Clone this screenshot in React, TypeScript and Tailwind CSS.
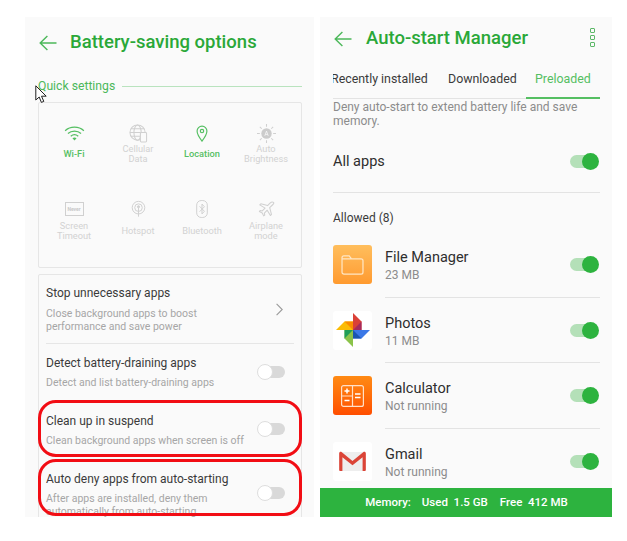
import { ReactNode } from "react";

const GREEN = "#2db33f";

function BackArrow() {
    return (
        <svg width="18" height="16" viewBox="0 0 18 16" fill="none" stroke="#4cb85a" strokeWidth="1.4">
            <path d="M17.5 8H1.2M8.4 1 1.2 8l7.2 7" />
        </svg>
    );
}

function ToggleOn() {
    return (
        <div className="relative mr-[1px] h-[17px] w-[29px] shrink-0">
            <div className="absolute left-0 top-[2px] h-[13px] w-[26px] rounded-full bg-[#b4e0b8]" />
            <div className="absolute right-0 top-0 h-[17px] w-[17px] rounded-full bg-[#2db33f]" />
        </div>
    );
}

function ToggleOff() {
    return (
        <div className="relative h-[16px] w-[28px] shrink-0">
            <div className="absolute right-0 top-[2px] h-[12px] w-[24px] rounded-full bg-[#d9d9d9]" />
            <div className="absolute left-0 top-0 h-[16px] w-[16px] rounded-full border border-[#dedede] bg-white" />
        </div>
    );
}

function QuickCell({ icon, label, active, up }: { icon: ReactNode; label: string[]; active?: boolean; up?: boolean }) {
    return (
        <div className="flex h-[76px] w-[64px] flex-col items-center">
            <div className="flex h-[22px] items-center justify-center">{icon}</div>
            <div
                className={`flex h-[22px] flex-col items-center justify-center text-center text-[9.25px] leading-[10px] ${
                    active ? "font-medium text-[#55bf62]" : "text-[#d2d2d2]"
                } ${up ? "-mt-[1px]" : ""}`}
            >
                {label.map((l) => (
                    <span key={l}>{l}</span>
                ))}
            </div>
        </div>
    );
}

function WifiIcon() {
    return (
        <svg width="21" height="15" viewBox="0 0 22 16" fill="none" stroke="#55bf62" strokeWidth="1.3">
            <path d="M1 5c5.500-5 14.500-5 20 0M4 8c3.800-3.400 10.200-3.400 14 0M7 11c2.300-2 5.700-2 8 0" />
            <path d="M8.800 13c1.300-1 3.100-1 4.400 0L11 15.500z" fill="#55bf62" stroke="none" />
        </svg>
    );
}

function GlobeIcon() {
    return (
        <svg width="19" height="19" viewBox="0 0 20 20" fill="none" stroke="#d0d0d0" strokeWidth="1.100">
            <circle cx="9" cy="9" r="8" />
            <ellipse cx="9" cy="9" rx="3.800" ry="8" />
            <path d="M1 9h16M2 5h14M2 13h14" />
            <rect x="12" y="9" width="6.500" height="10" rx="1" fill="#fafafa" />
        </svg>
    );
}

function PinIcon() {
    return (
        <svg width="12" height="17" viewBox="0 0 13 19" fill="none" stroke="#55bf62" strokeWidth="1.300">
            <path d="M6.500 18C3 13.500 1 10.500 1 6.800a5.500 5.500 0 0 1 11 0C12 10.500 10 13.500 6.500 18z" />
            <circle cx="6.500" cy="6.800" r="1.900" />
        </svg>
    );
}

function BrightnessIcon() {
    return (
        <svg width="19" height="19" viewBox="0 0 20 20" fill="none" stroke="#d0d0d0" strokeWidth="1.100">
            <path d="M10 0v3M10 17v3M0 10h3M17 10h3M3 3l2 2M15 15l2 2M3 17l2-2M15 5l2-2" />
            <circle cx="10" cy="10" r="5.500" fill="#cccccc" stroke="none" />
            <path d="M8.200 12.500 10 7.500l1.800 5M8.800 11h2.400" stroke="#fafafa" strokeWidth=".8" />
        </svg>
    );
}

function NeverIcon() {
    return (
        <div className="flex h-[14px] w-[19px] items-center justify-center border border-[#d0d0d0] text-[5px] font-bold leading-none text-[#c8c8c8]">
            Never
        </div>
    );
}

function HotspotIcon() {
    return (
        <svg width="15" height="18" viewBox="0 0 16 20" fill="none" stroke="#d0d0d0" strokeWidth="1.100">
            <circle cx="8" cy="8.500" r="7" />
            <circle cx="8" cy="8.500" r="4.200" />
            <circle cx="8" cy="7.500" r="1.200" fill="#d0d0d0" />
            <path d="M8 8.500v10" />
        </svg>
    );
}

function BluetoothIcon() {
    return (
        <svg width="12" height="18" viewBox="0 0 13 20" fill="none" stroke="#d0d0d0" strokeWidth="1.100">
            <rect x=".6" y=".6" width="11.800" height="18.800" rx="5" />
            <path d="m3.800 7 5.400 5.500L6.500 15.500v-11l2.700 3L3.800 13" />
        </svg>
    );
}

function PlaneIcon() {
    return (
        <svg width="17" height="17" viewBox="0 0 24 24" fill="none" stroke="#d0d0d0" strokeWidth="1.500" strokeLinejoin="round">
            <path d="M22 2c-1.500-1-3.500-.5-5 1l-3.500 3.500L4 4 2.500 5.500 10 10l-4 4-3-.5L2 15l4 2 2 4 1.500-1-.5-3 4-4 4.500 7.500L19 19l-2.500-9.500L20 6c1.500-1.500 3-3 2-4z" />
        </svg>
    );
}

function SettingRow({ title, sub, toggleTop }: { title: string; sub: string[]; toggleTop: string }) {
    return (
        <div className="flex h-[58px] items-start justify-between pl-[7px] pr-[16px]">
            <div className="pt-[11px]">
                <div className="text-[12px] leading-[16px] text-[#3a3a3a]">{title}</div>
                <div className="mt-[5px] text-[10.500px] leading-[13px] text-[#a6a6a6]">
                    {sub.map((s) => (
                        <div key={s}>{s}</div>
                    ))}
                </div>
            </div>
            <div className={toggleTop}>
                <ToggleOff />
            </div>
        </div>
    );
}

function RedBox({ children, box }: { children: ReactNode; box: string }) {
    return (
        <div className="relative">
            {children}
            <div className={`absolute -left-[1px] -right-[1px] h-[57px] rounded-[18px] border-[3px] border-[#f20d14] ${box}`} />
        </div>
    );
}

function FolderIcon() {
    return (
        <div className="flex h-[39px] w-[39px] items-center justify-center rounded-[3px] bg-gradient-to-b from-[#ffbe5c] to-[#ff9a2e]">
            <svg width="23" height="20" viewBox="0 0 24 21" fill="none" stroke="#ffe6c4" strokeWidth="1.300">
                <path d="M1 18V3a2 2 0 0 1 2-2h5.500L11 4h10a2 2 0 0 1 2 2v12a2 2 0 0 1-2 2H3a2 2 0 0 1-2-2zM11 4H1" />
            </svg>
        </div>
    );
}

function PhotosIcon() {
    return (
        <div className="flex h-[39px] w-[39px] items-center justify-center rounded-[3px] bg-white">
            <svg width="34" height="34" viewBox="0 0 34 34">
                <path d="M17 17V0l8.500 8.500V17z" fill="#da4037" />
                <path d="M17 17h17l-8.500 8.500H17z" fill="#3b78e7" />
                <path d="M17 17v17l-8.500-8.500V17z" fill="#8bc34a" />
                <path d="M17 17H0l8.500-8.500H17z" fill="#fbbc05" />
                <path d="M17 17 8.500 8.500H17z" fill="#fb8c00" />
                <path d="M17 17h8.500V8.500z" fill="#a52a5c" />
                <path d="M17 17v8.500h8.500z" fill="#1a56b0" />
                <path d="M17 17H8.500v8.500z" fill="#1f9e58" />
            </svg>
        </div>
    );
}

function CalcIcon() {
    return (
        <div className="flex h-[39px] w-[39px] items-center justify-center rounded-[3px] bg-gradient-to-b from-[#ff8a14] to-[#ff4d00]">
            <svg width="23" height="22" viewBox="0 0 23 22" fill="none" stroke="#ffe0c8" strokeWidth="1.200">
                <rect x=".6" y=".6" width="21.800" height="20.800" rx="2" />
                <path d="M11.500 1v20M1 11h10.500" />
                <path d="M3.500 6h5M6 3.500v5M3.500 15.500h5M14 9h5.500M14 12.500h5.500" strokeWidth="1.500" stroke="#fff" />
            </svg>
        </div>
    );
}

function GmailIcon() {
    return (
        <div className="flex h-[39px] w-[39px] items-center justify-center rounded-[3px] bg-white">
            <svg width="27" height="20" viewBox="0 0 28 21">
                <path d="M2 1h24v20H2z" fill="#eeeeee" />
                <path d="M2 1l12 10L26 1v3L14 14 2 4z" fill="#dddddd" />
                <path d="M0 2.500C0 1 1.500.3 2.800 1.300L14 10.500 25.200 1.300C26.500.3 28 1 28 2.500V20a1 1 0 0 1-1 1h-2.400V6.500L14 15 3.400 6.500V21H1a1 1 0 0 1-1-1z" fill="#db4437" />
            </svg>
        </div>
    );
}

function AppRow({ icon, name, sub, last }: { icon: ReactNode; name: string; sub: string; last?: boolean }) {
    return (
        <div className="flex h-[65.500px] gap-[13px]">
            <div className="shrink-0 pt-[13px]">{icon}</div>
            <div className={`flex flex-1 items-start justify-between pt-[16px] ${last ? "" : "border-b border-[#e3e3e3]"}`}>
                <div>
                    <div className="text-[14.500px] leading-[20px] text-[#2e2e2e]">{name}</div>
                    <div className="text-[12px] leading-[14px] text-[#8c8c8c]">{sub}</div>
                </div>
                <div className="mt-[8px]">
                    <ToggleOn />
                </div>
            </div>
        </div>
    );
}

export default function App() {
    return (
        <div className="relative flex h-[541px] w-[627px] gap-[6px] bg-white pl-[25px] pt-[17px] font-['Roboto',sans-serif]">
            {/* Battery-saving options */}
            <div className="h-[500px] w-[289px] overflow-hidden bg-[#fafafa] pl-[13px] pr-[12px]">
                <div className="flex h-[48px] items-center gap-[13px] pl-[1px] pt-[4px]">
                    <BackArrow />
                    <span className="text-[18.500px] font-medium text-[#2aa838]">Battery-saving options</span>
                </div>
                <div className="mt-[11px] flex h-[20px] items-center gap-[7px]">
                    <span className="text-[12.200px] text-[#4cb85a]">Quick settings</span>
                    <div className="h-px flex-1 bg-[#b9e3be]" />
                </div>
                <div className="mt-[6px] grid h-[166px] grid-cols-4 justify-items-center rounded-[2px] border border-[#e6e6e6] px-[3px] pt-[19px]">
                    <QuickCell icon={<WifiIcon />} label={["Wi-Fi"]} active up />
                    <QuickCell icon={<GlobeIcon />} label={["Cellular", "Data"]} up />
                    <QuickCell icon={<PinIcon />} label={["Location"]} active up />
                    <QuickCell icon={<BrightnessIcon />} label={["Auto", "Brightness"]} up />
                    <QuickCell icon={<NeverIcon />} label={["Screen", "Timeout"]} />
                    <QuickCell icon={<HotspotIcon />} label={["Hotspot"]} />
                    <QuickCell icon={<BluetoothIcon />} label={["Bluetooth"]} />
                    <QuickCell icon={<PlaneIcon />} label={["Airplane", "mode"]} />
                </div>
                <div className="mt-[6px] rounded-[2px] border border-[#e6e6e6] pt-[1px]">
                    <div className="flex h-[67px] items-center justify-between pl-[7px] pr-[18px]">
                        <div className="h-full pt-[9px]">
                            <div className="text-[12px] leading-[16px] text-[#3a3a3a]">Stop unnecessary apps</div>
                            <div className="mt-[6px] text-[10.500px] leading-[13px] text-[#a6a6a6]">
                                <div>Close background apps to boost</div>
                                <div>performance and save power</div>
                            </div>
                        </div>
                        <svg width="7" height="13" viewBox="0 0 7 13" fill="none" stroke="#9a9a9a" strokeWidth="1.100" className="-mt-[1px]">
                            <path d="m.6.8 5.600 5.700L.6 12.200" />
                        </svg>
                    </div>
                    <div className="mx-[7px] h-px bg-[#e6e6e6]" />
                    <SettingRow title="Detect battery-draining apps" sub={["Detect and list battery-draining apps"]} toggleTop="mt-[20px]" />
                    <RedBox box="-top-[2px]">
                        <SettingRow title="Clean up in suspend" sub={["Clean background apps when screen is off"]} toggleTop="mt-[19px]" />
                    </RedBox>
                    <RedBox box="-top-[1px]">
                        <SettingRow
                            title="Auto deny apps from auto-starting"
                            sub={["After apps are installed, deny them", "automatically from auto-starting"]}
                            toggleTop="mt-[25px]"
                        />
                    </RedBox>
                </div>
            </div>

            {/* Auto-start Manager */}
            <div className="relative h-[500px] w-[292px] overflow-hidden bg-[#fafafa]">
                <div className="pl-[13px] pr-[12px]">
                    <div className="flex h-[42px] items-center justify-between pr-[5px] pt-[2px]">
                        <div className="flex items-center gap-[14px] pl-[1px]">
                            <BackArrow />
                            <span className="text-[18.500px] font-medium text-[#2aa838]">Auto-start Manager</span>
                        </div>
                        <div className="-mt-[3px] flex flex-col gap-[2px]">
                            <div className="h-[5px] w-[5px] rounded-[1px] border-[1.500px] border-[#5cb868]" />
                            <div className="h-[5px] w-[5px] rounded-[1px] border-[1.500px] border-[#5cb868]" />
                            <div className="h-[5px] w-[5px] rounded-[1px] border-[1.500px] border-[#5cb868]" />
                        </div>
                    </div>
                    <div className="relative flex h-[40px] items-center border-b border-[#e3e3e3] pt-[2px] text-[12.400px] text-[#3a3a3a]">
                        <div className="w-[115px] overflow-hidden">
                            <span className="-ml-[2px] block">Recently installed</span>
                        </div>
                        <span className="w-[87px]">Downloaded</span>
                        <span className="text-[#55bf62]">Preloaded</span>
                        <div className="absolute bottom-[-1px] right-0 h-[2px] w-[74px] bg-[#55bf62]" />
                    </div>
                    <div className="mt-[1px] text-[12px] leading-[14px] text-[#8c8c8c]">
                        Deny auto-start to extend battery life and save memory.
                    </div>
                    <div className="flex h-[65px] items-center justify-between border-b border-[#e3e3e3] pt-[3px]">
                        <span className="text-[14.500px] text-[#2e2e2e]">All apps</span>
                        <ToggleOn />
                    </div>
                    <div className="mb-[7px] mt-[18px] text-[12px] leading-[14px] text-[#3a3a3a]">Allowed (8)</div>
                    <AppRow icon={<FolderIcon />} name="File Manager" sub="23 MB" />
                    <AppRow icon={<PhotosIcon />} name="Photos" sub="11 MB" />
                    <AppRow icon={<CalcIcon />} name="Calculator" sub="Not running" />
                    <AppRow icon={<GmailIcon />} name="Gmail" sub="Not running" last />
                </div>
                <div
                    className="absolute inset-x-0 bottom-0 flex h-[29px] items-center justify-center pl-[1px] text-[11.500px] font-medium text-white"
                    style={{ backgroundColor: GREEN }}
                >
                    <span className="mr-[11px]">Memory:</span>
                    <span className="mr-[12px]">Used&nbsp; 1.5 GB</span>
                    <span>Free&nbsp; 412 MB</span>
                </div>
            </div>

            {/* Mouse cursor */}
            <svg className="absolute left-[35px] top-[85px]" width="13" height="19" viewBox="0 0 13 19" fill="#fff" stroke="#222" strokeWidth="1">
                <path d="M.8.800v14.200l3.400-3 2.200 5.400 2.400-1-2.300-5.200h4.700z" />
            </svg>
        </div>
    );
}
